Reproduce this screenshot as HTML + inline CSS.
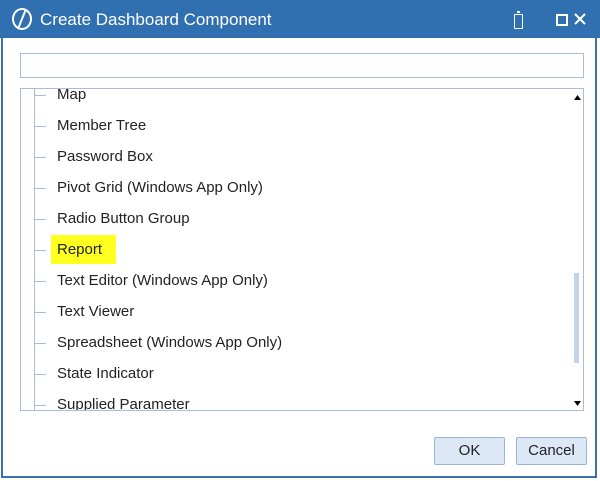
<!DOCTYPE html>
<html><head><style>
body{margin:0;width:600px;height:481px;background:#fff;position:relative;overflow:hidden;font-family:"Liberation Sans",sans-serif}
.win{position:absolute;left:1px;top:0;width:596px;height:478px;border:2px solid #3a72b0;border-top:none;box-sizing:border-box;background:#fff}
.title{position:absolute;left:0;top:0;width:600px;height:38px;background:#3170b0;color:#fff;font-size:17px}
.title span{position:absolute;left:40px;top:10px}
.inp{position:absolute;left:20px;top:53px;width:564px;height:25px;border:1px solid #a8bddb;box-sizing:border-box}
.list{position:absolute;left:20px;top:88px;width:564px;height:323px;border:1px solid #a8bddb;box-sizing:border-box;overflow:hidden}
.vl{position:absolute;left:13px;top:0;width:1px;height:323px;background:#a9bddc}
.it{position:absolute;left:36px;font-size:15px;color:#222}
.it:before{content:"";position:absolute;left:-23px;top:9px;width:12px;height:1px;background:#a9bddc}
.hl{background:#ffff20;padding:6px 14px 6px 6px;margin-left:-6px}
.thumb{position:absolute;left:553px;top:184px;width:5px;height:90px;background:#c3d3ea}
.btn{position:absolute;top:437px;height:28px;border:1px solid #9ab4d8;background:#dde8f6;box-sizing:border-box;font-size:15px;text-align:center;line-height:26px;color:#222;border-radius:2px}
</style></head><body>
<div class="win"></div>
<div class="title">
<svg style="position:absolute;left:10px;top:7px" width="24" height="24" viewBox="0 0 24 24"><ellipse cx="12" cy="12" rx="9" ry="10" fill="none" stroke="#fff" stroke-width="2"/><path d="M16 2 L8 22" stroke="#fff" stroke-width="2"/></svg>
<span>Create Dashboard Component</span>
<div style="position:absolute;left:514px;top:14px;width:7px;height:13px;border:1.5px solid #fff;border-radius:1px"></div>
<div style="position:absolute;left:517px;top:11px;width:3px;height:2px;background:#fff"></div>
<div style="position:absolute;left:556px;top:14px;width:8px;height:8px;border:2px solid #fff"></div>
<svg style="position:absolute;left:574px;top:13px" width="12" height="12" viewBox="0 0 12 12"><path d="M1 1L11 11M11 1L1 11" stroke="#fff" stroke-width="2"/></svg>
</div>
<div class="inp"></div>
<div class="list">
<div class="vl"></div>
<div class="it" style="top:-3px">Map</div>
<div class="it" style="top:28px">Member Tree</div>
<div class="it" style="top:59px">Password Box</div>
<div class="it" style="top:90px">Pivot Grid (Windows App Only)</div>
<div class="it" style="top:121px">Radio Button Group</div>
<div class="it" style="top:152px"><span class="hl">Report</span></div>
<div class="it" style="top:183px">Text Editor (Windows App Only)</div>
<div class="it" style="top:214px">Text Viewer</div>
<div class="it" style="top:245px">Spreadsheet (Windows App Only)</div>
<div class="it" style="top:276px">State Indicator</div>
<div class="it" style="top:307px">Supplied Parameter</div>
<svg style="position:absolute;left:553px;top:6px" width="7" height="5"><path d="M0 5L3.5 0L7 5Z" fill="#000"/></svg>
<svg style="position:absolute;left:553px;top:312px" width="7" height="5"><path d="M0 0L3.5 5L7 0Z" fill="#000"/></svg>
<div class="thumb"></div>
</div>
<div class="btn" style="left:434px;width:71px">OK</div>
<div class="btn" style="left:516px;width:71px">Cancel</div>
</body></html>
